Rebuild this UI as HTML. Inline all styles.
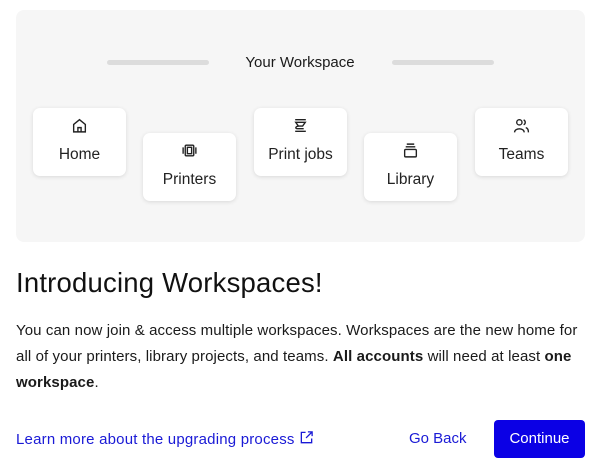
<!DOCTYPE html>
<html><head><style>
*{margin:0;padding:0;box-sizing:border-box}
body{width:600px;height:470px;background:#fff;font-family:"Liberation Sans",sans-serif;color:#111;position:relative;overflow:hidden}
.panel{position:absolute;left:16px;top:10px;width:569px;height:232px;background:#f6f6f6;border-radius:8px}
.bar{position:absolute;top:60px;height:5px;width:102px;background:#dcdcdc;border-radius:3px}
.ttl{position:absolute;top:54px;left:0;width:600px;text-align:center;font-size:15px;color:#1a1a1a}
.card{position:absolute;width:93px;height:68px;background:#fff;border-radius:7px;box-shadow:0 1px 4px rgba(0,0,0,.12);text-align:center;font-size:15.5px;color:#222}
.card svg{position:absolute;left:38px;top:9px}
.card span{position:absolute;left:0;right:0;top:38px}
h1{position:absolute;left:16px;top:267px;font-size:27.5px;font-weight:normal;color:#111;letter-spacing:0.2px}
p{position:absolute;left:16px;top:318px;width:580px;font-size:15px;line-height:26px;color:#1a1a1a;letter-spacing:0.1px}
.link{position:absolute;left:16px;top:430px;font-size:15px;color:#1a1ad6;letter-spacing:0.2px}
.back{position:absolute;left:409px;top:430px;font-size:15px;color:#1a1ad6}
.btn{position:absolute;left:494px;top:420px;width:91px;height:38px;background:#0b00e5;color:#fff;border-radius:4px;font-size:15px;text-align:center;line-height:38px}
</style></head><body>
<div class="panel"></div>
<div class="bar" style="left:107px"></div>
<div class="bar" style="left:392px"></div>
<div class="ttl">Your Workspace</div>
<div class="card" style="left:33px;top:108px"><svg width="17" height="17" viewBox="0 0 16 16" fill="none" stroke="#222" stroke-width="1.3"><path d="M2.5 7L8 2.5 13.5 7V14H2.5Z"/><path d="M6.5 14V10H9.5V14"/></svg><span>Home</span></div>
<div class="card" style="left:143px;top:133px"><svg width="17" height="17" viewBox="0 0 16 16" fill="none" stroke="#222" stroke-width="1.3"><rect x="4" y="3" width="8" height="10" rx="1"/><rect x="6" y="5" width="4" height="6"/><path d="M2 5v6M14 5v6"/></svg><span>Printers</span></div>
<div class="card" style="left:254px;top:108px"><svg width="17" height="17" viewBox="0 0 16 16" fill="none" stroke="#222" stroke-width="1.3"><path d="M3 2.5H13M3.5 5H12.5L10 8.5H6Z"/><path d="M6 8.5C3 9 3 11 5 11H11M3 13.5H13"/></svg><span>Print jobs</span></div>
<div class="card" style="left:364px;top:133px"><svg width="17" height="17" viewBox="0 0 16 16" fill="none" stroke="#222" stroke-width="1.3"><path d="M4.5 2H11.5M3.5 4.5H12.5"/><rect x="2.5" y="7" width="11" height="7" rx="1"/></svg><span>Library</span></div>
<div class="card" style="left:475px;top:108px"><svg width="17" height="17" viewBox="0 0 16 16" fill="none" stroke="#222" stroke-width="1.3"><circle cx="6" cy="5" r="2.5"/><path d="M1.5 14.5C1.5 10 10.5 10 10.5 14.5"/><path d="M10 2.7A2.5 2.5 0 0 1 10 7.3M12 10C14 10.5 14.5 12 14.5 14.5"/></svg><span>Teams</span></div>
<h1>Introducing Workspaces!</h1>
<p>You can now join &amp; access multiple workspaces. Workspaces are the new home for<br>all of your printers, library projects, and teams. <b>All accounts</b> will need at least <b>one</b><br><b>workspace</b>.</p>
<div class="link">Learn more about the upgrading process <svg width="15" height="15" viewBox="0 0 16 16" fill="none" stroke="#1a1ad6" stroke-width="1.4" style="vertical-align:-1px"><path d="M7 2.5H2.5V13.5H13.5V9M9.5 2H14V6.5M14 2L7.5 8.5"/></svg></div>
<div class="back">Go Back</div>
<div class="btn">Continue</div>
</body></html>
